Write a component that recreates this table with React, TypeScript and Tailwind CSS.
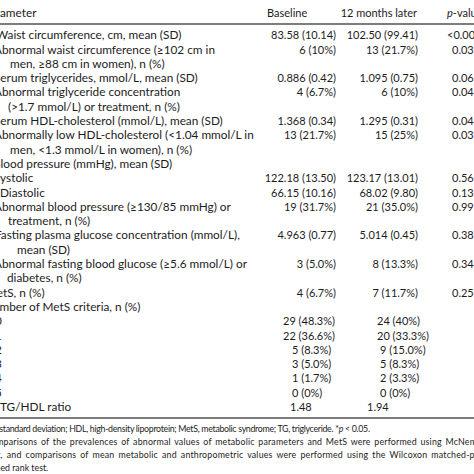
import React from 'react';

type Row = {
  lines: string[];
  pl: string;
  hang?: string;
  b?: string;
  m?: string;
  p?: string;
  bCls?: string;
  mCls?: string;
};

// label offsets are measured from the table's left edge (20px off-screen)
const rows: Row[] = [
  { lines: ['Waist circumference, cm, mean (SD)'], pl: 'pl-[16px]', b: '83.58 (10.14)', m: '102.50 (99.41)', p: '<0.001*' },
  { lines: ['Abnormal waist circumference (≥102 cm in', 'men, ≥88 cm in women), n (%)'], pl: 'pl-[14px]', hang: 'pl-[30px]', b: '6 (10%)', m: '13 (21.7%)', p: '0.039*' },
  { lines: ['Serum triglycerides, mmol/L, mean (SD)'], pl: 'pl-[14px]', b: '0.886 (0.42)', m: '1.095 (0.75)', p: '0.063' },
  { lines: ['Abnormal triglyceride concentration', '(>1.7 mmol/L) or treatment, n (%)'], pl: 'pl-[14px]', hang: 'pl-[28px]', b: '4 (6.7%)', m: '6 (10%)', p: '0.041*' },
  { lines: ['Serum HDL-cholesterol (mmol/L), mean (SD)'], pl: 'pl-[14px]', b: '1.368 (0.34)', m: '1.295 (0.31)', p: '0.046*' },
  { lines: ['Abnormally low HDL-cholesterol (<1.04 mmol/L in', 'men, <1.3 mmol/L in women), n (%)'], pl: 'pl-[14px]', hang: 'pl-[30px]', b: '13 (21.7%)', m: '15 (25%)', p: '0.035*' },
  { lines: ['Blood pressure (mmHg), mean (SD)'], pl: 'pl-[13px]' },
  { lines: ['Systolic'], pl: 'pl-[14px]', b: '122.18 (13.50)', m: '123.17 (13.01)', p: '0.566' },
  { lines: ['Diastolic'], pl: 'pl-[20px]', b: '66.15 (10.16)', m: '68.02 (9.80)', p: '0.130' },
  { lines: ['Abnormal blood pressure (≥130/85 mmHg) or', 'treatment, n (%)'], pl: 'pl-[14px]', hang: 'pl-[28px]', b: '19 (31.7%)', m: '21 (35.0%)', p: '0.999' },
  { lines: ['Fasting plasma glucose concentration (mmol/L),', 'mean (SD)'], pl: 'pl-[15px]', hang: 'pl-[37px]', b: '4.963 (0.77)', m: '5.014 (0.45)', p: '0.386' },
  { lines: ['Abnormal fasting blood glucose (≥5.6 mmol/L) or', 'diabetes, n (%)'], pl: 'pl-[14px]', hang: 'pl-[27px]', b: '3 (5.0%)', m: '8 (13.3%)', p: '0.344' },
  { lines: ['MetS, n (%)'], pl: 'pl-[6px]', b: '4 (6.7%)', m: '7 (11.7%)', p: '0.250' },
  { lines: ['Number of MetS criteria, n (%)'], pl: 'pl-[4px]' },
  { lines: ['0'], pl: 'pl-[15px]', b: '29 (48.3%)', m: '24 (40%)', bCls: 'pl-[21px]', mCls: 'pl-[41px]' },
  { lines: ['1'], pl: 'pl-[15px]', b: '22 (36.6%)', m: '20 (33.3%)', bCls: 'pl-[21px]', mCls: 'pl-[41px]' },
  { lines: ['2'], pl: 'pl-[15px]', b: '5 (8.3%)', m: '9 (15.0%)', bCls: 'pl-[30px]', mCls: 'pl-[44px]' },
  { lines: ['3'], pl: 'pl-[15px]', b: '3 (5.0%)', m: '5 (8.3%)', bCls: 'pl-[30px]', mCls: 'pl-[44px]' },
  { lines: ['4'], pl: 'pl-[15px]', b: '1 (1.7%)', m: '2 (3.3%)', bCls: 'pl-[30px]', mCls: 'pl-[44px]' },
  { lines: ['5'], pl: 'pl-[15px]', b: '0 (0%)', m: '0 (0%)', bCls: 'pl-[30px]', mCls: 'pl-[44px]' },
  { lines: ['TG/HDL ratio'], pl: 'pl-[20px]', b: '1.48', m: '1.94', bCls: 'pl-[28px]', mCls: 'pl-[31px]' },
];

function PValue({ v }: { v?: string }) {
  if (!v) return null;
  if (v.startsWith('<')) return <span className="ml-[-5px]">{v}</span>;
  return <span>{v}</span>;
}

export default function App() {
  return (
    <div
      className="w-[474px] h-[474px] overflow-hidden bg-white text-[#1c1c1c]"
      style={{ fontFamily: 'Lato, "Noto Sans", sans-serif' }}
    >
      <div className="ml-[-20px] w-[540px] text-[11px] leading-[14.3px] whitespace-nowrap">
        {/* header */}
        <div className="grid grid-cols-[282px_74px_82px_102px] pt-[6px] pb-[2.5px]">
          <div className="pl-[3px] text-[11.8px]">Parameter</div>
          <div className="pl-[5px]">Baseline</div>
          <div className="text-right pr-[1px]">12 months later</div>
          <div className="pl-[29px]">
            <i>p</i>-value
          </div>
        </div>
        <div className="h-[2px] bg-[#7d7d7d]" />

        <div className="pt-[3.5px] pb-[3px]">
          {rows.map((r, i) => (
            <div key={i} className="grid grid-cols-[282px_74px_82px_102px]">
              <div className="flex flex-col text-[11.8px]">
                {r.lines.map((l, j) => (
                  <span key={j} className={j === 0 ? r.pl : r.hang}>
                    {l}
                  </span>
                ))}
              </div>
              <div className={r.bCls ?? 'text-right'}>{r.b}</div>
              <div className={r.mCls ?? 'text-right'}>{r.m}</div>
              <div className="pl-[34px]">
                <PValue v={r.p} />
              </div>
            </div>
          ))}
        </div>
        <div className="h-[2px] bg-[#7d7d7d]" />

        {/* footnote */}
        <div className="pt-[3px] pl-[5px] text-[8.8px] leading-[13px]">
          <div className="tracking-[-0.3px]">
            SD, standard deviation; HDL, high-density lipoprotein; MetS, metabolic syndrome; TG, triglyceride.{' '}
            *<i>p</i> &lt; 0.05.
          </div>
          <div className="w-[506px] tracking-[0.2px] text-justify [text-align-last:justify] whitespace-normal">
            Comparisons of the prevalences of abnormal values of metabolic parameters and MetS were performed using
            McNemar&apos;s
          </div>
          <div className="w-[504px] tracking-[0.2px] text-justify [text-align-last:justify] whitespace-normal">
            test, and comparisons of mean metabolic and anthropometric values were performed using the Wilcoxon
            matched-pairs
          </div>
          <div>signed rank test.</div>
        </div>
      </div>
    </div>
  );
}
